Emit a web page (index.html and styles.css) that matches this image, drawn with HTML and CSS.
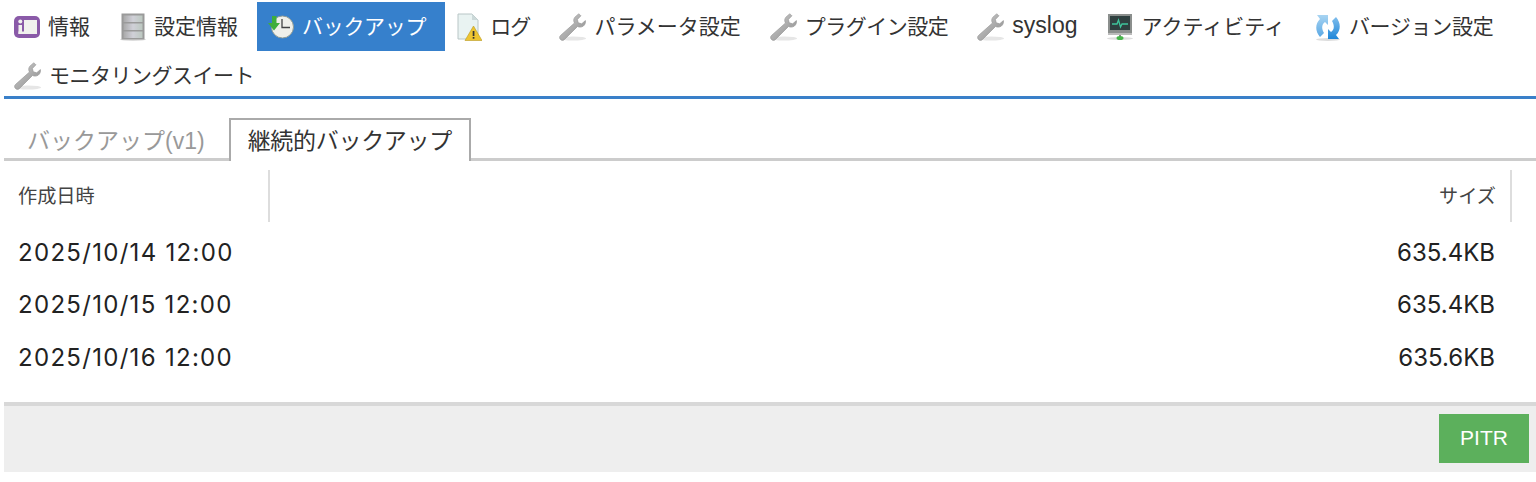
FILE: index.html
```html
<!DOCTYPE html>
<html>
<head>
    <title>バックアップ</title>
    <link rel="stylesheet" href="styles.css">
</head>
<body>
    <svg class="defs" width="0" height="0">
        <defs>
            <linearGradient id="steel" x1="0" y1="0" x2="1" y2="1">
                <stop offset="0" stop-color="#d0d0d0"/>
                <stop offset="1" stop-color="#8a8a8a"/>
            </linearGradient>
            <linearGradient id="blue" x1="0" y1="0" x2="0" y2="1">
                <stop offset="0" stop-color="#a8d4f2"/>
                <stop offset="1" stop-color="#5aa8e4"/>
            </linearGradient>
            <linearGradient id="blue-dark" x1="0" y1="0" x2="0" y2="1">
                <stop offset="0" stop-color="#7fbdec"/>
                <stop offset="1" stop-color="#1f86d8"/>
            </linearGradient>
            <linearGradient id="rack" x1="0" y1="0" x2="1" y2="0">
                <stop offset="0" stop-color="#a9a9a9"/>
                <stop offset=".5" stop-color="#d0d0d8"/>
                <stop offset="1" stop-color="#bcc8c0"/>
            </linearGradient>
            <symbol id="wrench" viewBox="0 0 28 28">
                <ellipse cx="14" cy="25.500" rx="13" ry="2" fill="#e6e6e6"/>
                <path d="M19.500 1l-3.800 3.400c-1.300 1.900-1.200 3.900-.2 5.600L1.500 22.500c-1.200 1.200-1.200 2.800 0 4s2.800 1.200 4 0L18.500 13.500c2 .9 4.100.8 5.800-.4 1.700-1.300 2.500-3.400 2.100-5.500l-3.700 3.200-3.500-1-.8-3.400 3.500-3.600C21.200 1.900 20.300 1 19.500 1z" fill="url(#steel)" stroke="#999" stroke-width=".7"/>
            </symbol>
        </defs>
    </svg>

    <div class="main-nav">
        <a class="nav-item first">
            <svg class="icon" viewBox="0 0 26 28">
                <rect x="0" y="3" width="26" height="22" rx="5" fill="#8a5aa8"/>
                <rect x="10" y="7" width="13" height="14" fill="#f1f1ee"/>
                <rect x="4.500" y="12" width="3.500" height="9" fill="#f1f1ee"/>
                <rect x="4.500" y="18.500" width="6" height="2.500" fill="#f1f1ee"/>
                <circle cx="6.300" cy="8.500" r="2" fill="#f1f1ee"/>
            </svg>
            <span>情報</span>
        </a>
        <a class="nav-item">
            <svg class="icon" viewBox="0 0 26 28">
                <ellipse cx="13" cy="26.500" rx="13" ry="1.500" fill="#ddd"/>
                <rect x="1.500" y="0.500" width="23" height="26" fill="#9a9a9a"/>
                <rect x="3.500" y="2.500" width="19" height="6.500" fill="url(#rack)"/>
                <rect x="3.500" y="10.500" width="19" height="6.500" fill="url(#rack)"/>
                <rect x="3.500" y="18.500" width="19" height="6.500" fill="url(#rack)"/>
            </svg>
            <span>設定情報</span>
        </a>
        <a class="nav-item active">
            <svg class="icon" viewBox="0 0 26 28">
                <circle cx="14.500" cy="14" r="11" fill="#f0f0ea" stroke="#8f9a94" stroke-width="1"/>
                <path d="M14 6v8.500h8" fill="none" stroke="#444" stroke-width="1.300"/>
                <path d="M4 3h4.500v7H12l-6 7.500L0 10h4z" fill="#3fae3c"/>
            </svg>
            <span class="tight-1">バックアップ</span>
        </a>
        <a class="nav-item">
            <svg class="icon" viewBox="0 0 26 28">
                <path d="M2 1h14l6 6v19H2z" fill="#e9f3f2" stroke="#b9c6c6"/>
                <path d="M16 1v6h6z" fill="#ccd9d9"/>
                <path d="M17.500 13L26 27.500H9z" fill="#eec431" stroke="#b99a22" stroke-width=".6"/>
                <rect x="16.700" y="18" width="1.700" height="5" fill="#333"/>
                <rect x="16.700" y="24" width="1.700" height="1.700" fill="#333"/>
            </svg>
            <span class="tight-3">ログ</span>
        </a>
        <a class="nav-item">
            <svg class="icon wrench"><use href="#wrench"/></svg>
            <span>パラメータ設定</span>
        </a>
        <a class="nav-item">
            <svg class="icon wrench"><use href="#wrench"/></svg>
            <span class="tight-2">プラグイン設定</span>
        </a>
        <a class="nav-item">
            <svg class="icon wrench"><use href="#wrench"/></svg>
            <span class="wide">syslog</span>
        </a>
        <a class="nav-item">
            <svg class="icon" viewBox="0 0 26 28">
                <ellipse cx="13" cy="25.500" rx="13" ry="1.500" fill="#ddd"/>
                <rect x="1" y="1" width="24" height="19" fill="#8b8f8d"/>
                <rect x="3" y="3" width="20" height="14" fill="#2f4040"/>
                <path d="M5 11h5l1.500-4 2 7 1.500-3h6" fill="none" stroke="#3fc59c" stroke-width="1.300"/>
                <rect x="1" y="20" width="24" height="2" fill="#bbb"/>
                <rect x="12" y="22" width="2" height="2" fill="#888"/>
                <ellipse cx="13" cy="25" rx="3.500" ry="2" fill="#46b54a"/>
            </svg>
            <span>アクティビティ</span>
        </a>
        <a class="nav-item">
            <svg class="icon" viewBox="0 0 26 28">
                <ellipse cx="13" cy="26.500" rx="12" ry="1.500" fill="#ddd"/>
                <path d="M2 2H13V12L10 9C7 11 6 15 9 20L5 24C0 18 0 11 5 6z" fill="url(#blue)"/>
                <path d="M24 26H13V16L16 19C19 17 20 13 17 8L21 4C26 10 26 17 21 22z" fill="url(#blue-dark)"/>
            </svg>
            <span class="tight-1">バージョン設定</span>
        </a>
        <a class="nav-item">
            <svg class="icon wrench"><use href="#wrench"/></svg>
            <span class="tight-2">モニタリングスイート</span>
        </a>
    </div>

    <div class="tabs">
        <a class="tab">バックアップ<span class="wide">(v1)</span></a>
        <a class="tab active">継続的バックアップ</a>
    </div>

    <table class="backup-table">
        <thead>
            <tr>
                <th class="col-date">作成日時</th>
                <th class="col-size">サイズ</th>
            </tr>
        </thead>
        <tbody>
            <tr><td>2025/10/14 12:00</td><td class="col-size">635.4KB</td></tr>
            <tr><td>2025/10/15 12:00</td><td class="col-size">635.4KB</td></tr>
            <tr><td>2025/10/16 12:00</td><td class="col-size">635.6KB</td></tr>
        </tbody>
    </table>

    <div class="footer">
        <button class="pitr-btn">PITR</button>
    </div>
</body>
</html>
```

FILE: styles.css
```css
body {
    margin: 0;
    padding-left: 4px;
    font-family: "Liberation Sans", "Noto Sans CJK JP", sans-serif;
    color: #333;
    background-color: #fff;
}
.defs {
    position: absolute;
}
.main-nav {
    display: flex;
    flex-wrap: wrap;
    align-content: flex-start;
    box-sizing: border-box;
    height: 99px;
    padding-top: 2px;
    border-bottom: 3px solid #3a80c9;
}
.nav-item {
    display: flex;
    align-items: center;
    gap: 8px;
    box-sizing: border-box;
    height: 49px;
    padding: 0 19px 0 10px;
    font-size: 21px;
    color: #333;
}
.nav-item.first {
    padding-left: 9px;
}
.nav-item.active {
    background-color: #3680cc;
    color: #fff;
}
.nav-item span {
    padding-bottom: 3px;
}
.icon {
    width: 26px;
    height: 28px;
    flex: none;
    margin-left: 1px;
    filter: blur(0.5px);
}
.wrench {
    width: 28px;
    margin-left: 0;
    margin-right: -1px;
}
.wide {
    font-size: 23px;
}
.tight-1 {
    letter-spacing: -0.3px;
}
.tight-2 {
    letter-spacing: -0.5px;
}
.tight-3 {
    letter-spacing: -0.9px;
}
.tabs {
    display: flex;
    align-items: flex-end;
    height: 62px;
    box-sizing: border-box;
    border-bottom: 3px solid #ccc;
}
.tab {
    padding: 0 24px 0 23px;
    font-size: 23px;
    line-height: 34px;
    color: #999;
}
.tab.active {
    margin-bottom: -3px;
    padding: 3px 17px 2px;
    border: 2px solid #aaa;
    border-bottom: none;
    background-color: #fff;
    line-height: 36px;
    letter-spacing: -0.3px;
    color: #333;
}
.backup-table {
    width: 1508px;
    margin-top: 9px;
    border-collapse: collapse;
}
.backup-table th {
    height: 50px;
    padding: 0 14px 2px;
    font-size: 19.2px;
    font-weight: normal;
    text-align: left;
    color: #444;
    border-right: 2px solid #ddd;
}
.backup-table td {
    height: 52.5px;
    padding: 0 16px 0 14px;
    font-family: Inter, sans-serif;
    font-size: 24px;
    color: #222;
}
.backup-table td:first-child {
    letter-spacing: 1.3px;
}
.backup-table tbody tr:first-child td {
    padding-top: 4px;
}
.backup-table .col-date {
    width: 236px;
}
.backup-table .col-size {
    text-align: right;
}
.footer {
    display: flex;
    justify-content: flex-end;
    box-sizing: border-box;
    height: 70px;
    margin-top: 18px;
    padding: 8px 7px 0 0;
    border-top: 4px solid #d8d8d8;
    background-color: #eee;
}
.pitr-btn {
    width: 90px;
    height: 49px;
    border: none;
    background-color: #5cb05c;
    color: #fff;
    font-family: "Liberation Sans", sans-serif;
    font-size: 21px;
}
```
